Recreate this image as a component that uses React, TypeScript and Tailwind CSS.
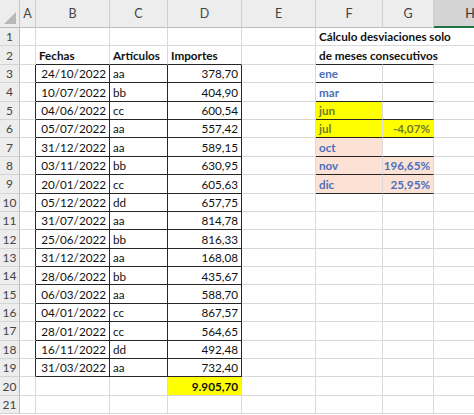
type Cell = {
  text?: string
  align?: "left" | "right"
  bold?: boolean
  color?: string
  bg?: string
  right?: string
  bottom?: string
}

const COLS = ["A", "B", "C", "D", "E", "F", "G", "H"]

const data: [string, string, string][] = [
  ["24/10/2022", "aa", "378,70"],
  ["10/07/2022", "bb", "404,90"],
  ["04/06/2022", "cc", "600,54"],
  ["05/07/2022", "aa", "557,42"],
  ["31/12/2022", "aa", "589,15"],
  ["03/11/2022", "bb", "630,95"],
  ["20/01/2022", "cc", "605,63"],
  ["05/12/2022", "dd", "657,75"],
  ["31/07/2022", "aa", "814,78"],
  ["25/06/2022", "bb", "816,33"],
  ["31/12/2022", "aa", "168,08"],
  ["28/06/2022", "bb", "435,67"],
  ["06/03/2022", "aa", "588,70"],
  ["04/01/2022", "cc", "867,57"],
  ["28/01/2022", "cc", "564,65"],
  ["16/11/2022", "dd", "492,48"],
  ["31/03/2022", "aa", "732,40"],
]

const blue = "text-[#4a6fbd]"
const olive = "text-[#6f7a2c]"
const yellow = "bg-[#ffff00]"
const peach = "bg-[#fbe2d5]"

// months block in F:G, rows 3-9
const months: Record<number, { f: string; g?: string; fc: string; fbg?: string; gbg?: string }> = {
  3: { f: "ene", fc: blue },
  4: { f: "mar", fc: blue },
  5: { f: "jun", fc: olive, fbg: yellow },
  6: { f: "jul", g: "-4,07%", fc: olive, fbg: yellow, gbg: yellow },
  7: { f: "oct", fc: blue, fbg: peach },
  8: { f: "nov", g: "196,65%", fc: blue, fbg: peach, gbg: peach },
  9: { f: "dic", g: "25,95%", fc: blue, fbg: peach, gbg: peach },
}

function getCell(r: number, c: string): Cell {
  const cell: Cell = { right: "border-r-[#d9d9d9]", bottom: "border-b-[#d9d9d9]" }
  const inTable = r >= 3 && r <= 19

  if (c === "A" && inTable) cell.right = "border-r-[#262626]"
  if ((c === "B" || c === "C" || c === "D") && inTable) {
    cell.right = "border-r-[#262626]"
    cell.bottom = "border-b-[#262626]"
    const row = data[r - 3]
    if (c === "B") Object.assign(cell, { text: row[0], align: "right" })
    if (c === "C") Object.assign(cell, { text: row[1], align: "left" })
    if (c === "D") Object.assign(cell, { text: row[2], align: "right" })
  }
  if (r === 2) {
    if (c === "B") Object.assign(cell, { text: "Fechas", bold: true })
    if (c === "C") Object.assign(cell, { text: "Artículos", bold: true })
    if (c === "D") Object.assign(cell, { text: "Importes", bold: true })
    if (c === "B" || c === "C" || c === "D") cell.bottom = "border-b-[#262626]"
  }
  if (r === 20 && c === "D") Object.assign(cell, { text: "9.905,70", bold: true, align: "right", bg: yellow })

  if (r === 1 || r === 2) {
    if (c === "F") cell.text = r === 1 ? "Cálculo desviaciones solo" : "de meses consecutivos"
    if (c === "F") cell.bold = true
    if (c === "F" || c === "G") cell.right = "border-r-transparent"
    if (r === 2 && (c === "F" || c === "G")) cell.bottom = "border-b-[#262626]"
  }
  const m = months[r]
  if (m && (c === "F" || c === "G")) {
    cell.bottom = "border-b-[#262626]"
    if (c === "F") Object.assign(cell, { text: m.f, bold: true, color: m.fc, bg: m.fbg })
    if (c === "G") Object.assign(cell, { text: m.g, bold: true, color: m.fc, bg: m.gbg, align: "right" })
  }
  return cell
}

function Corner() {
  return (
    <div className="border-r border-b border-r-[#c6c6c6] border-b-[#bcbcbc] bg-[#ededed] relative">
      <svg className="absolute right-[3px] bottom-[3px]" width="12" height="12" viewBox="0 0 12 12">
        <polygon points="12,0 12,12 0,12" fill="#b8b8b8" />
      </svg>
    </div>
  )
}

export default function App() {
  const rows = Array.from({ length: 21 }, (_, i) => i + 1)
  return (
    <div
      className="w-[474px] h-[415px] overflow-hidden bg-white text-[11.7px] text-[#111]"
      style={{ fontFamily: "Lato, 'Liberation Sans', sans-serif" }}
    >
      <div className="grid grid-cols-[20px_16px_74px_58px_74px_74px_67px_51px_72px] grid-rows-[28px_repeat(21,18.4px)]">
        <Corner />
        {COLS.map((c) => (
          <div
            key={c}
            className={
              c === "H"
                ? "flex items-center justify-center pt-[2px] bg-[#d4d4d4] border-b-2 border-b-[#217346] text-[#333] text-[12.5px]"
                : "flex items-center justify-center pt-[2px] bg-[#ededed] border-r border-b border-r-[#cfcfcf] border-b-[#bcbcbc] text-[#444] text-[12.5px]"
            }
          >
            {c}
          </div>
        ))}
        {rows.map((r) => (
          <Row key={r} r={r} />
        ))}
      </div>
    </div>
  )
}

function Row({ r }: { r: number }) {
  return (
    <>
      <div className="flex items-center justify-center pt-[1px] bg-[#ededed] border-r border-b border-r-[#bcbcbc] border-b-[#d4d4d4] text-[#444] text-[12px]">
        {r}
      </div>
      {COLS.map((c) => {
        const cell = getCell(r, c)
        return (
          <div
            key={c}
            className={[
              "flex items-center border-r border-b px-[3px] pt-[1px] whitespace-nowrap overflow-visible",
              cell.right,
              cell.bottom,
              cell.bg ?? "",
              cell.align === "right" ? "justify-end" : "justify-start",
              cell.bold ? "font-bold" : "",
              cell.color ?? "",
            ].join(" ")}
          >
            {cell.text}
          </div>
        )
      })}
    </>
  )
}
